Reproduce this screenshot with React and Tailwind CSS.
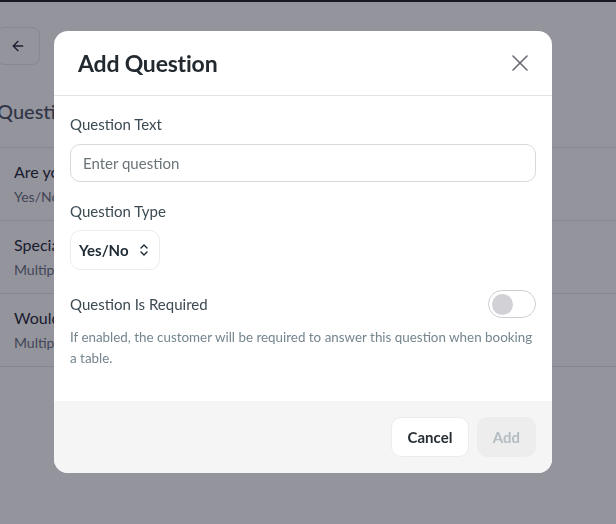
import React from "react";

const font = { fontFamily: "Lato, 'Noto Sans', sans-serif" };

function Row({ title, sub }) {
  return (
    <div className="flex flex-col justify-center h-[73px] border-b border-gray-200 pl-[14px]">
      <div className="w-[40px] overflow-hidden text-[16px] leading-[22px] text-[#1f2937] whitespace-nowrap">{title}</div>
      <div className="w-[40px] overflow-hidden text-[14px] leading-[20px] text-[#6b7280] mt-[4px] whitespace-nowrap">{sub}</div>
    </div>
  );
}

export default function App() {
  return (
    <div className="relative w-[616px] h-[524px] overflow-hidden bg-white" style={font}>
      {/* background page */}
      <div className="h-[2px] bg-[#1f1f24]" />
      <div className="pt-[25px]">
        <div className="-ml-[4px] w-[44px] h-[38px] rounded-lg border border-gray-200 flex items-center pl-[13px] text-[#1f2937]">
          <svg width="16" height="16" viewBox="0 0 24 24" fill="none" stroke="currentColor" strokeWidth="2" strokeLinecap="round" strokeLinejoin="round">
            <path d="M19 12H5" />
            <path d="M12 19l-7-7 7-7" />
          </svg>
        </div>
        <div className="-ml-[3px] w-[57px] overflow-hidden whitespace-nowrap mt-[32px] text-[20px] leading-[28px] font-medium text-[#4b5563] h-[36px]">Questions</div>
        <div className="border-t border-gray-200 mt-[14px]">
          <Row title="Are you celebrating a special occasion?" sub="Yes/No" />
          <Row title="Special requests" sub="Multiple choice" />
          <Row title="Would you like a high chair?" sub="Multiple choice" />
        </div>
      </div>

      {/* overlay */}
      <div className="fixed inset-0 bg-[rgba(17,17,37,0.45)] pl-[54px] pt-[31px]">
        <div className="w-[498px] bg-white rounded-[14px] overflow-hidden">
          <div className="h-[65px] border-b border-[#e3e3e6] flex items-center justify-between pl-[24px] pr-[24px]">
            <div className="text-[23px] font-bold text-[#22292f] tracking-[-0.2px]">Add Question</div>
            <svg width="16" height="16" viewBox="0 0 16 16" fill="none" stroke="#6b6b74" strokeWidth="1.6" strokeLinecap="round">
              <path d="M1 1L15 15" />
              <path d="M15 1L1 15" />
            </svg>
          </div>
          <div className="px-[16px] pt-[16px] pb-[32px]">
            <div className="text-[15px] leading-[24px] text-[#3c4a52]">Question Text</div>
            <div className="mt-[8px] h-[38px] rounded-[10px] border border-[#d9d9dc] flex items-center px-[12px]">
              <span className="text-[15px] text-[#6b7479]">Enter question</span>
            </div>
            <div className="mt-[17px] text-[15px] leading-[24px] text-[#3c4a52]">Question Type</div>
            <div className="mt-[7px] w-[90px] h-[40px] rounded-[10px] border border-[#ececee] flex items-center pl-[8px] gap-[10px]">
              <span className="text-[15px] font-bold text-[#1d2a33]">Yes/No</span>
              <svg width="10" height="14" viewBox="0 0 10 14" fill="none" stroke="#1d2a33" strokeWidth="1.4" strokeLinecap="round" strokeLinejoin="round">
                <path d="M2 5L5 2L8 5" />
                <path d="M2 9L5 12L8 9" />
              </svg>
            </div>
            <div className="mt-[20px] flex items-center justify-between">
              <div className="text-[15px] leading-[24px] text-[#3c4a52]">Question Is Required</div>
              <div className="w-[48px] h-[28px] rounded-full border border-[#cfcfd3] bg-white flex items-center pl-[3px]">
                <div className="w-[21px] h-[21px] rounded-full bg-[#d1d1d6]" />
              </div>
            </div>
            <div className="mt-[9px] text-[13.4px] leading-[21px] text-[#74858e]">
              If enabled, the customer will be required to answer this question when booking a table.
            </div>
          </div>
          <div className="h-[72px] bg-[#f5f5f5] flex items-center justify-end gap-[8px] px-[16px]">
            <div className="w-[78px] h-[40px] rounded-[10px] bg-white border border-[#ececee] flex items-center justify-center text-[15px] font-bold text-[#262d33]">
              Cancel
            </div>
            <div className="w-[59px] h-[40px] rounded-[10px] bg-[#ededed] flex items-center justify-center text-[15px] font-bold text-[#b3bdc2]">
              Add
            </div>
          </div>
        </div>
      </div>
    </div>
  );
}
